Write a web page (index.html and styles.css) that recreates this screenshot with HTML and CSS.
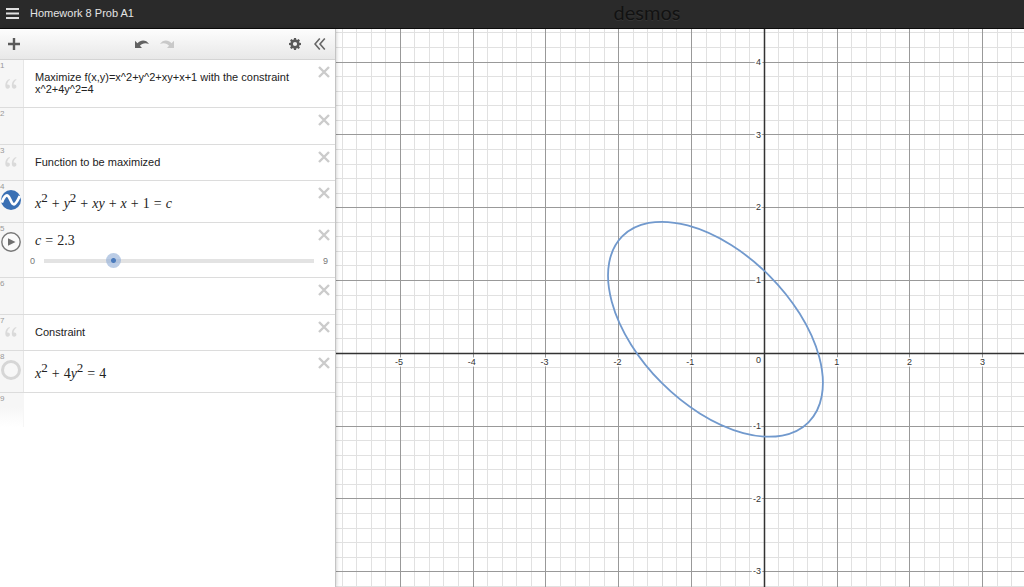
FILE: index.html
```html
<!DOCTYPE html>
<html lang="en">
<head>
<meta charset="utf-8">
<title>Homework 8 Prob A1</title>
<link rel="stylesheet" href="styles.css">
</head>
<body>
<svg class="defs" aria-hidden="true">
  <symbol id="close" viewBox="0 0 12 12"><path d="M1 1L11 11M11 1L1 11" fill="none" stroke="currentColor" stroke-width="2.400"/></symbol>
  <symbol id="quote" viewBox="0 0 12 10"><path d="M4.800 0C2 .8.3 3 .3 6.400c0 2 .9 3.300 2.400 3.300 1.300 0 2.200-.9 2.200-2.200 0-1.300-.8-2.100-2-2.100-.3 0-.6.1-.8.2C2.300 3.600 3.200 1.900 4.800.9zM11.300 0C8.500.8 6.800 3 6.800 6.400c0 2 .9 3.300 2.400 3.300 1.300 0 2.200-.9 2.200-2.200 0-1.300-.8-2.100-2-2.100-.3 0-.6.1-.8.2.2-2 1.100-3.700 2.700-4.700z" fill="currentColor"/></symbol>
</svg>
<header class="header">
  <button class="menu" aria-label="Menu"><svg width="13" height="11" viewBox="0 0 13 11"><path d="M0 1H13M0 5.500H13M0 10H13" stroke="#e0e0e0" stroke-width="2"/></svg></button>
  <h1 class="title">Homework 8 Prob A1</h1>
  <span class="logo">desmos</span>
</header>
<main class="workspace">
  <section class="panel" aria-label="Expressions">
    <div class="toolbar">
      <button class="tool" aria-label="Add item"><svg width="12" height="12" viewBox="0 0 12 12"><path d="M6 0V12M0 6H12" stroke="#5a5a5a" stroke-width="2.400"/></svg></button>
      <div class="history">
        <button class="tool" aria-label="Undo"><svg width="14" height="9" viewBox="0 0 14 9"><path d="M0 .8V8H7L4.900 5.700C7 3.200 10.400 2.500 14 4 11.200-.2 6-.6 2.500 3.200z" fill="#626262"/></svg></button>
        <button class="tool" aria-label="Redo"><svg width="14" height="9" viewBox="0 0 14 9"><path d="M14 .8V8H7L9.100 5.700C7 3.200 3.600 2.500 0 4 2.800-.2 8-.6 11.500 3.200z" fill="#c9c9c9"/></svg></button>
      </div>
      <div class="view-tools">
        <button class="tool" aria-label="Settings"><svg width="12" height="12" viewBox="-6 -6 12 12"><g fill="#5a5a5a"><path id="tooth" d="M-1-6H1L1.500-3.500H-1.500z"/><use href="#tooth" transform="rotate(45)"/><use href="#tooth" transform="rotate(90)"/><use href="#tooth" transform="rotate(135)"/><use href="#tooth" transform="rotate(180)"/><use href="#tooth" transform="rotate(225)"/><use href="#tooth" transform="rotate(270)"/><use href="#tooth" transform="rotate(315)"/></g><circle r="3.300" fill="none" stroke="#5a5a5a" stroke-width="2.400"/></svg></button>
        <button class="tool" aria-label="Hide list"><svg width="12" height="12" viewBox="0 0 12 12"><path d="M5.800.5L1 6l4.800 5.500M10.800.5L6 6l4.800 5.500" fill="none" stroke="#666" stroke-width="1.600"/></svg></button>
      </div>
    </div>
    <ol class="list">
      <li class="row note tall">
        <div class="gutter"><span class="num">1</span><svg class="quote"><use href="#quote"/></svg></div>
        <textarea class="text" rows="2" aria-label="Note 1">Maximize f(x,y)=x^2+y^2+xy+x+1 with the constraint x^2+4y^2=4</textarea>
        <button class="delete" aria-label="Delete 1"><svg><use href="#close"/></svg></button>
      </li>
      <li class="row empty">
        <div class="gutter"><span class="num">2</span></div>
        <input class="text" type="text" aria-label="Expression 2">
        <button class="delete" aria-label="Delete 2"><svg><use href="#close"/></svg></button>
      </li>
      <li class="row note">
        <div class="gutter"><span class="num">3</span><svg class="quote"><use href="#quote"/></svg></div>
        <textarea class="text" rows="1" aria-label="Note 3">Function to be maximized</textarea>
        <button class="delete" aria-label="Delete 3"><svg><use href="#close"/></svg></button>
      </li>
      <li class="row expr">
        <div class="gutter"><span class="num">4</span><button class="mark" aria-label="Hide curve 4"><svg viewBox="0 0 20 20"><circle cx="10" cy="10" r="10" fill="#3a70b4"/><path d="M.8 12.500C2.800 7.500 5 4.300 7 5.800 9.400 7.500 10.200 14.600 13 14.300 15.200 14 16.700 10.500 18.800 6" fill="none" stroke="#fff" stroke-width="2.800"/></svg></button></div>
        <div class="math"><i>x</i><sup>2</sup><b>+</b><i>y</i><sup>2</sup><b>+</b><i>xy</i><b>+</b><i>x</i><b>+</b>1<b>=</b><i>c</i></div>
        <button class="delete" aria-label="Delete 4"><svg><use href="#close"/></svg></button>
      </li>
      <li class="row slider">
        <div class="gutter"><span class="num">5</span><button class="mark" aria-label="Play c"><svg viewBox="0 0 20 20"><circle cx="10" cy="10" r="9.200" fill="#fafafa" stroke="#777" stroke-width="1.400"/><path d="M7 6.200V13.800L14.500 10z" fill="#707070"/></svg></button></div>
        <div class="body">
          <label class="math" for="c"><i>c</i><b>=</b>2.3</label>
          <div class="range"><span>0</span><input id="c" type="range" min="0" max="9" step="0.1" value="2.3"><span>9</span></div>
        </div>
        <button class="delete" aria-label="Delete 5"><svg><use href="#close"/></svg></button>
      </li>
      <li class="row empty">
        <div class="gutter"><span class="num">6</span></div>
        <input class="text" type="text" aria-label="Expression 6">
        <button class="delete" aria-label="Delete 6"><svg><use href="#close"/></svg></button>
      </li>
      <li class="row note">
        <div class="gutter"><span class="num">7</span><svg class="quote"><use href="#quote"/></svg></div>
        <textarea class="text" rows="1" aria-label="Note 7">Constraint</textarea>
        <button class="delete" aria-label="Delete 7"><svg><use href="#close"/></svg></button>
      </li>
      <li class="row expr">
        <div class="gutter"><span class="num">8</span><button class="mark" aria-label="Show curve 8"><svg viewBox="0 0 20 20"><circle cx="10" cy="10" r="8.500" fill="#f7f7f7" stroke="#d6d6d6" stroke-width="3"/></svg></button></div>
        <div class="math"><i>x</i><sup>2</sup><b>+</b>4<i>y</i><sup>2</sup><b>=</b>4</div>
        <button class="delete" aria-label="Delete 8"><svg><use href="#close"/></svg></button>
      </li>
      <li class="row empty last">
        <div class="gutter"><span class="num">9</span></div>
        <input class="text" type="text" aria-label="Expression 9">
      </li>
    </ol>
  </section>
  <svg class="graph" id="graph" role="img" aria-label="Graph of the ellipse"></svg>
</main>
<script src="graph.js"></script>
</body>
</html>
```
FILE: styles.css
```css
* { box-sizing: border-box; }
html, body { height: 100%; }
body {
  margin: 0;
  display: flex;
  flex-direction: column;
  overflow: hidden;
  font-family: "Liberation Sans", Arial, sans-serif;
  font-size: 11px;
  color: #222;
  background: #fff;
}
button { border: 0; padding: 0; background: none; display: flex; cursor: pointer; }
.defs { display: none; }

.header {
  display: flex;
  align-items: center;
  flex: none;
  position: relative;
  height: 29px;
  padding: 0 6px 2px;
  background: #2a2a2a;
  border-bottom: 1px solid #0c0c0c;
}
.title { margin: 0 0 0 11px; font-size: 11px; font-weight: normal; color: #e4e4e4; }
.logo {
  position: absolute;
  top: 0;
  left: 336px;
  right: 0;
  padding-right: 66px;
  text-align: center;
  font: 20px/24px Lato, sans-serif;
  color: #121212;
  text-shadow: 0 1px 0 #363636;
}

.workspace { display: flex; flex: 1; min-height: 0; }
.panel {
  flex: none;
  width: 336px;
  border-right: 1px solid #c4c4c4;
  box-shadow: 0 0 4px rgba(0, 0, 0, .25);
  position: relative;
  background: #fff;
}
.toolbar {
  display: grid;
  grid-template-columns: 127px auto 1fr;
  align-items: center;
  height: 31px;
  padding: 0 9px 0 8px;
  background: linear-gradient(#fdfdfd, #e8e8e8);
  border-bottom: 1px solid #d4d4d4;
}
.history { display: flex; gap: 11px; }
.view-tools { display: flex; gap: 13px; justify-content: flex-end; }

.list { list-style: none; margin: 0; padding: 0; }
.row { display: flex; position: relative; min-height: 36px; border-bottom: 1px solid #dcdcdc; }
.tall { min-height: 48px; }
.empty { min-height: 37px; }
.expr { min-height: 42px; }
.slider { min-height: 55px; }
.last { border: 0; min-height: 34px; }
.gutter {
  flex: none;
  width: 24px;
  background: #f6f6f6;
  border-right: 1px solid #e6e6e6;
}
.last .gutter { background: linear-gradient(#f6f6f6 40%, #fff); border-color: #f6f6f6; }
.num { display: block; height: 9px; font-size: 8px; line-height: 11px; color: #999; }
.quote { display: block; width: 12px; height: 10px; margin: 3px 0 0 5px; color: #dadada; }
.tall .quote { margin-top: 10px; }
.mark { width: 20px; height: 20px; margin-left: 1px; }
.mark svg { width: 20px; height: 20px; }
.text {
  flex: 1;
  min-width: 0;
  margin: 0 36px 0 0;
  padding: 11px 0 0 11px;
  border: 0;
  outline: 0;
  background: none;
  resize: none;
  overflow: hidden;
  font: 11px/12px "Liberation Sans", Arial, sans-serif;
  color: #222;
}
.delete { position: absolute; top: 6px; right: 5px; color: #cbcbcb; }
.delete svg { width: 12px; height: 12px; }

.math {
  padding: 13px 0 0 11px;
  font: 14px/20px "Liberation Serif", "Times New Roman", serif;
  color: #222;
  white-space: nowrap;
}
.math b { font-weight: normal; margin: 0 4px; }
.math sup { font-size: 13px; line-height: 0; vertical-align: 6px; }
.body { flex: 1; }
.body .math { display: block; padding-top: 8px; }
.range {
  display: flex;
  align-items: center;
  gap: 2px;
  height: 16px;
  margin-top: 2px;
  padding: 0 7px 0 6px;
  font-size: 9px;
  color: #777;
}
.range input { flex: 1; min-width: 0; height: 16px; margin: 0; appearance: none; background: none; }
.range input::-webkit-slider-runnable-track {
  height: 4px;
  background: linear-gradient(#e3e3e3, #e3e3e3) center / calc(100% - 14px) 4px no-repeat;
}
.range input::-webkit-slider-thumb {
  appearance: none;
  width: 15px;
  height: 15px;
  margin-top: -6px;
  border-radius: 50%;
  background: radial-gradient(circle, #4a7bbd 2px, rgba(150, 177, 216, .65) 3px);
}

.graph { flex: 1; min-width: 0; height: 100%; display: block; }
.minor { stroke: #e1e1e1; }
.major { stroke: #999; }
.axis { stroke: #333; stroke-width: 1.5; }
.curve { fill: none; stroke: #7199cd; stroke-width: 1.8; }
.tick { font-size: 9px; fill: #333; stroke: #fff; stroke-width: 3; paint-order: stroke; }
```
FILE: graph.js
```js
const svg = document.getElementById("graph");
const UNIT = 72.8;
const DIVISIONS = 5;

function add(name, attrs, text) {
  const el = document.createElementNS("http://www.w3.org/2000/svg", name);
  for (const key in attrs) el.setAttribute(key, attrs[key]);
  if (text !== undefined) el.textContent = text;
  svg.appendChild(el);
}

function draw() {
  svg.replaceChildren();
  const { width, height } = svg.getBoundingClientRect();
  const ox = Math.round(width * 0.622);
  const oy = Math.round(height * 0.5815);
  const snap = v => Math.floor(v + 0.3) + 0.5;
  const vertical = (i, cls) => {
    const x = snap(ox + i * UNIT / DIVISIONS);
    add("line", { x1: x, x2: x, y1: 0, y2: height, class: cls });
  };
  const horizontal = (i, cls) => {
    const y = snap(oy - i * UNIT / DIVISIONS);
    add("line", { x1: 0, x2: width, y1: y, y2: y, class: cls });
  };
  const step = UNIT / DIVISIONS;
  const left = Math.ceil(-ox / step), right = Math.floor((width - ox) / step);
  const bottom = Math.ceil((oy - height) / step), top = Math.floor(oy / step);

  for (const cls of ["minor", "major"]) {
    const wanted = i => (i % DIVISIONS === 0) === (cls === "major");
    for (let i = left; i <= right; i++) if (i && wanted(i)) vertical(i, cls);
    for (let i = bottom; i <= top; i++) if (i && wanted(i)) horizontal(i, cls);
  }
  for (let n = Math.ceil(left / DIVISIONS); n <= right / DIVISIONS; n++) {
    if (n) add("text", { x: ox + n * UNIT - (n < 0 ? 1 : 0), y: oy + 12, class: "tick", "text-anchor": "middle" }, n);
  }
  for (let n = Math.ceil(bottom / DIVISIONS); n <= top / DIVISIONS; n++) {
    if (n) add("text", { x: ox - 3, y: oy - n * UNIT + 3, class: "tick", "text-anchor": "end" }, n);
  }
  add("text", { x: ox - 3, y: oy + 10, class: "tick", "text-anchor": "end" }, 0);
  vertical(0, "axis");
  horizontal(0, "axis");

  // x² + y² + xy + x + 1 = c, an ellipse centred on (-2/3, 1/3)
  const k = 2.3 - 2 / 3;
  const cx = ox - UNIT * 2 / 3, cy = oy + 0.5 - UNIT / 3;
  add("ellipse", {
    cx, cy,
    rx: UNIT * Math.sqrt(k / 0.5),
    ry: UNIT * Math.sqrt(k / 1.5),
    transform: `rotate(45 ${cx} ${cy})`,
    class: "curve"
  });
}

draw();
addEventListener("resize", draw);
```
